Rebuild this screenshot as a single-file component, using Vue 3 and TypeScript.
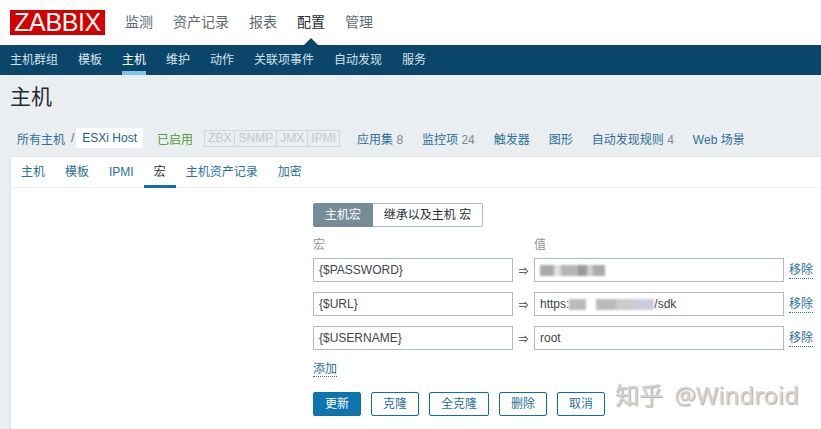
<script setup lang="ts">
const topNav = ['监测', '资产记录', '报表', '配置', '管理']
const subNav = ['主机群组', '模板', '主机', '维护', '动作', '关联项事件', '自动发现', '服务']
const links = [
  { t: '应用集', n: '8' },
  { t: '监控项', n: '24' },
  { t: '触发器', n: '' },
  { t: '图形', n: '' },
  { t: '自动发现规则', n: '4' },
  { t: 'Web 场景', n: '' },
]
const tabs = ['主机', '模板', 'IPMI', '宏', '主机资产记录', '加密']
const rows = [
  { key: '{$PASSWORD}', pre: '', blur: 'a', post: '' },
  { key: '{$URL}', pre: 'https:', blur: 'b', post: '/sdk' },
  { key: '{$USERNAME}', pre: 'root', blur: '', post: '' },
]
const buttons = ['克隆', '全克隆', '删除', '取消']
</script>

<template>
  <div class="page">
    <header class="top">
      <div class="logo">ZABBIX</div>
      <nav class="top-nav">
        <span v-for="n in topNav" :key="n" :class="{ on: n === '配置' }">{{ n }}</span>
      </nav>
    </header>
    <nav class="sub-nav">
      <span v-for="n in subNav" :key="n" :class="{ on: n === '主机' }">{{ n }}</span>
    </nav>
    <h1 class="title">主机</h1>
    <div class="crumbs">
      <span class="link">所有主机</span>
      <span class="sep">/</span>
      <span class="host">ESXi Host</span>
      <span class="enabled">已启用</span>
      <div class="status">
        <span>ZBX</span><span>SNMP</span><span>JMX</span><span>IPMI</span>
      </div>
      <div class="links">
        <span v-for="l in links" :key="l.t" class="link">{{ l.t }}<em v-if="l.n">{{ ' ' + l.n }}</em></span>
      </div>
    </div>
    <main class="panel">
      <div class="tabs">
        <span v-for="t in tabs" :key="t" :class="{ on: t === '宏' }">{{ t }}</span>
      </div>
      <form class="form" @submit.prevent>
        <div class="seg">
          <span class="seg-on">主机宏</span>
          <span class="seg-off">继承以及主机 宏</span>
        </div>
        <div class="labels">
          <span class="col-key">宏</span>
          <span class="col-val">值</span>
        </div>
        <div v-for="r in rows" :key="r.key" class="row">
          <div class="field col-key">{{ r.key }}</div>
          <span class="arrow">⇒</span>
          <div class="field col-val">
            <span>{{ r.pre }}</span>
            <span v-if="r.blur === 'a'" class="blur blur-a"></span>
            <span v-if="r.blur === 'b'" class="blur blur-b"></span>
            <span>{{ r.post }}</span>
          </div>
          <span class="dotted">移除</span>
        </div>
        <div class="add"><span class="dotted">添加</span></div>
        <div class="actions">
          <span class="btn primary">更新</span>
          <span v-for="b in buttons" :key="b" class="btn">{{ b }}</span>
        </div>
      </form>
      <div class="mark">知乎 @Windroid</div>
    </main>
  </div>
</template>

<style>
html, body { margin: 0; background: #fff; }
</style>

<style scoped>
.page {
  width: 821px;
  height: 429px;
  overflow: hidden;
  background: #ebeef0;
  font-family: "Liberation Sans", "Noto Sans CJK SC", sans-serif;
  font-size: 12px;
  color: #1f2c33;
}
.top {
  height: 45px;
  background: #fff;
  display: flex;
  align-items: center;
  padding-left: 10px;
  box-sizing: border-box;
}
.logo {
  width: 95px;
  height: 25px;
  background: #d40000;
  color: #fff;
  font-size: 25px;
  line-height: 25px;
  letter-spacing: -0.4px;
  text-align: center;
}
.top-nav {
  display: flex;
  gap: 20px;
  margin-left: 20px;
  margin-bottom: 2px;
  font-size: 14px;
  line-height: 20px;
  color: #5c6a72;
  position: relative;
}
.top-nav .on {
  color: #1f2c33;
  position: relative;
}
.top-nav .on::after {
  content: "";
  position: absolute;
  left: 6px;
  bottom: -14px;
  border-left: 8px solid transparent;
  border-right: 8px solid transparent;
  border-bottom: 8px solid #0a466a;
}
.sub-nav {
  height: 30px;
  background: #0a466a;
  display: flex;
  gap: 20px;
  padding-left: 10px;
  color: #d7e3ea;
  line-height: 31px;
}
.sub-nav .on {
  color: #fff;
  height: 30px;
  box-sizing: border-box;
  border-bottom: 4px solid #7fc5e8;
}
.title {
  margin: 0;
  height: 45px;
  padding: 9px 0 0 10px;
  box-sizing: border-box;
  font-size: 21px;
  line-height: 26px;
  font-weight: 400;
  color: #1f2c33;
}
.crumbs {
  height: 36px;
  display: flex;
  align-items: center;
  padding-left: 17px;
}
.link { color: #2a6f96; }
.link em { font-style: normal; color: #7a8890; white-space: pre; }
.sep { margin: 0 2px 0 6px; color: #5c6a72; }
.host {
  background: #fff;
  color: #1f5f85;
  height: 20px;
  line-height: 20px;
  padding: 0 6px;
}
.enabled { margin-left: 14px; color: #4d9c3c; }
.status {
  margin-left: 11px;
  width: 136px;
  height: 17px;
  box-sizing: border-box;
  display: flex;
  border: 1px solid #d3d7da;
  color: #c3c8cc;
  font-size: 12px;
  line-height: 15px;
}
.status span {
  padding: 0 3px;
  flex: auto;
  text-align: center;
  border-right: 1px solid #d3d7da;
}
.status span:last-child { border-right: 0; }
.links {
  display: flex;
  gap: 19px;
  margin-left: 17px;
}
.panel {
  position: relative;
  margin-left: 10px;
  height: 273px;
  box-sizing: border-box;
  background: #fff;
  border-left: 1px solid #dde2e5;
  border-top: 1px solid #e2e6e9;
}
.tabs {
  height: 31px;
  box-sizing: border-box;
  display: flex;
  gap: 20px;
  padding-left: 10px;
  border-bottom: 1px solid #ebeef0;
  color: #2a6f96;
  line-height: 30px;
}
.tabs .on {
  color: #1f2c33;
  height: 31px;
  box-sizing: border-box;
  padding: 0 10px;
  margin: 0 -10px;
  border-bottom: 3px solid #0f6f9f;
}
.form {
  width: 500px;
  margin-left: 302px;
  padding-top: 15px;
}
.seg {
  display: flex;
  width: 170px;
  height: 24px;
  line-height: 23px;
  text-align: center;
}
.seg span { box-sizing: border-box; border: 1px solid #acbbc2; }
.seg-on {
  width: 60px;
  background: #768d99;
  color: #fff;
  border-color: #768d99 !important;
  border-radius: 2px 0 0 2px;
}
.seg-off {
  width: 110px;
  border-left: 0 !important;
  border-radius: 0 2px 2px 0;
}
.labels {
  display: flex;
  height: 26px;
  padding-top: 11px;
  box-sizing: border-box;
  color: #8a979e;
  line-height: 14px;
}
.labels .col-key { width: 221px; }
.row {
  display: flex;
  align-items: center;
  height: 34px;
}
.row .field {
  box-sizing: border-box;
  height: 24px;
  line-height: 22px;
  border: 1px solid #acbbc2;
  padding: 0 5px;
  color: #3a464d;
  display: flex;
  align-items: center;
}
.row .col-key { width: 200px; }
.row .col-val { width: 250px; }
.arrow {
  width: 21px;
  text-align: center;
  font-size: 10px;
  color: #3a464d;
}
.dotted {
  color: #2a6f96;
  border-bottom: 1px dotted #2a6f96;
  line-height: 15px;
}
.row .dotted { margin-left: 5px; margin-top: 2px; }
.blur { display: inline-block; height: 11px; filter: blur(1.2px); }
.blur-a {
  width: 65px;
  background: linear-gradient(90deg, #aaa 0 22%, #ddd 22% 32%, #b5b5b5 32% 58%, #999 58% 72%, #ccc 72% 82%, #aaa 82%);
}
.blur-b {
  width: 85px;
  background: linear-gradient(90deg, #bbb 0 20%, #fff 20% 32%, #bbb 32% 55%, #ccc 55% 75%, #ccd 75%);
}
.add { margin-top: 7px; height: 30px; }
.actions {
  display: flex;
  gap: 10px;
}
.btn {
  box-sizing: border-box;
  height: 24px;
  line-height: 23px;
  min-width: 48px;
  padding: 0 11px;
  text-align: center;
  border: 1px solid #0f6f9f;
  border-radius: 2px;
  color: #2a6f96;
}
.btn.primary { background: #0f75b0; color: #fff; }
.mark {
  position: absolute;
  left: 604px;
  top: 222px;
  font-family: "Noto Sans", "Noto Sans CJK SC", sans-serif;
  font-size: 24px;
  line-height: 32px;
  word-spacing: 5px;
  color: #d4d4d4;
  text-shadow: 1px 1px 1px #aaa;
  white-space: nowrap;
}
</style>
